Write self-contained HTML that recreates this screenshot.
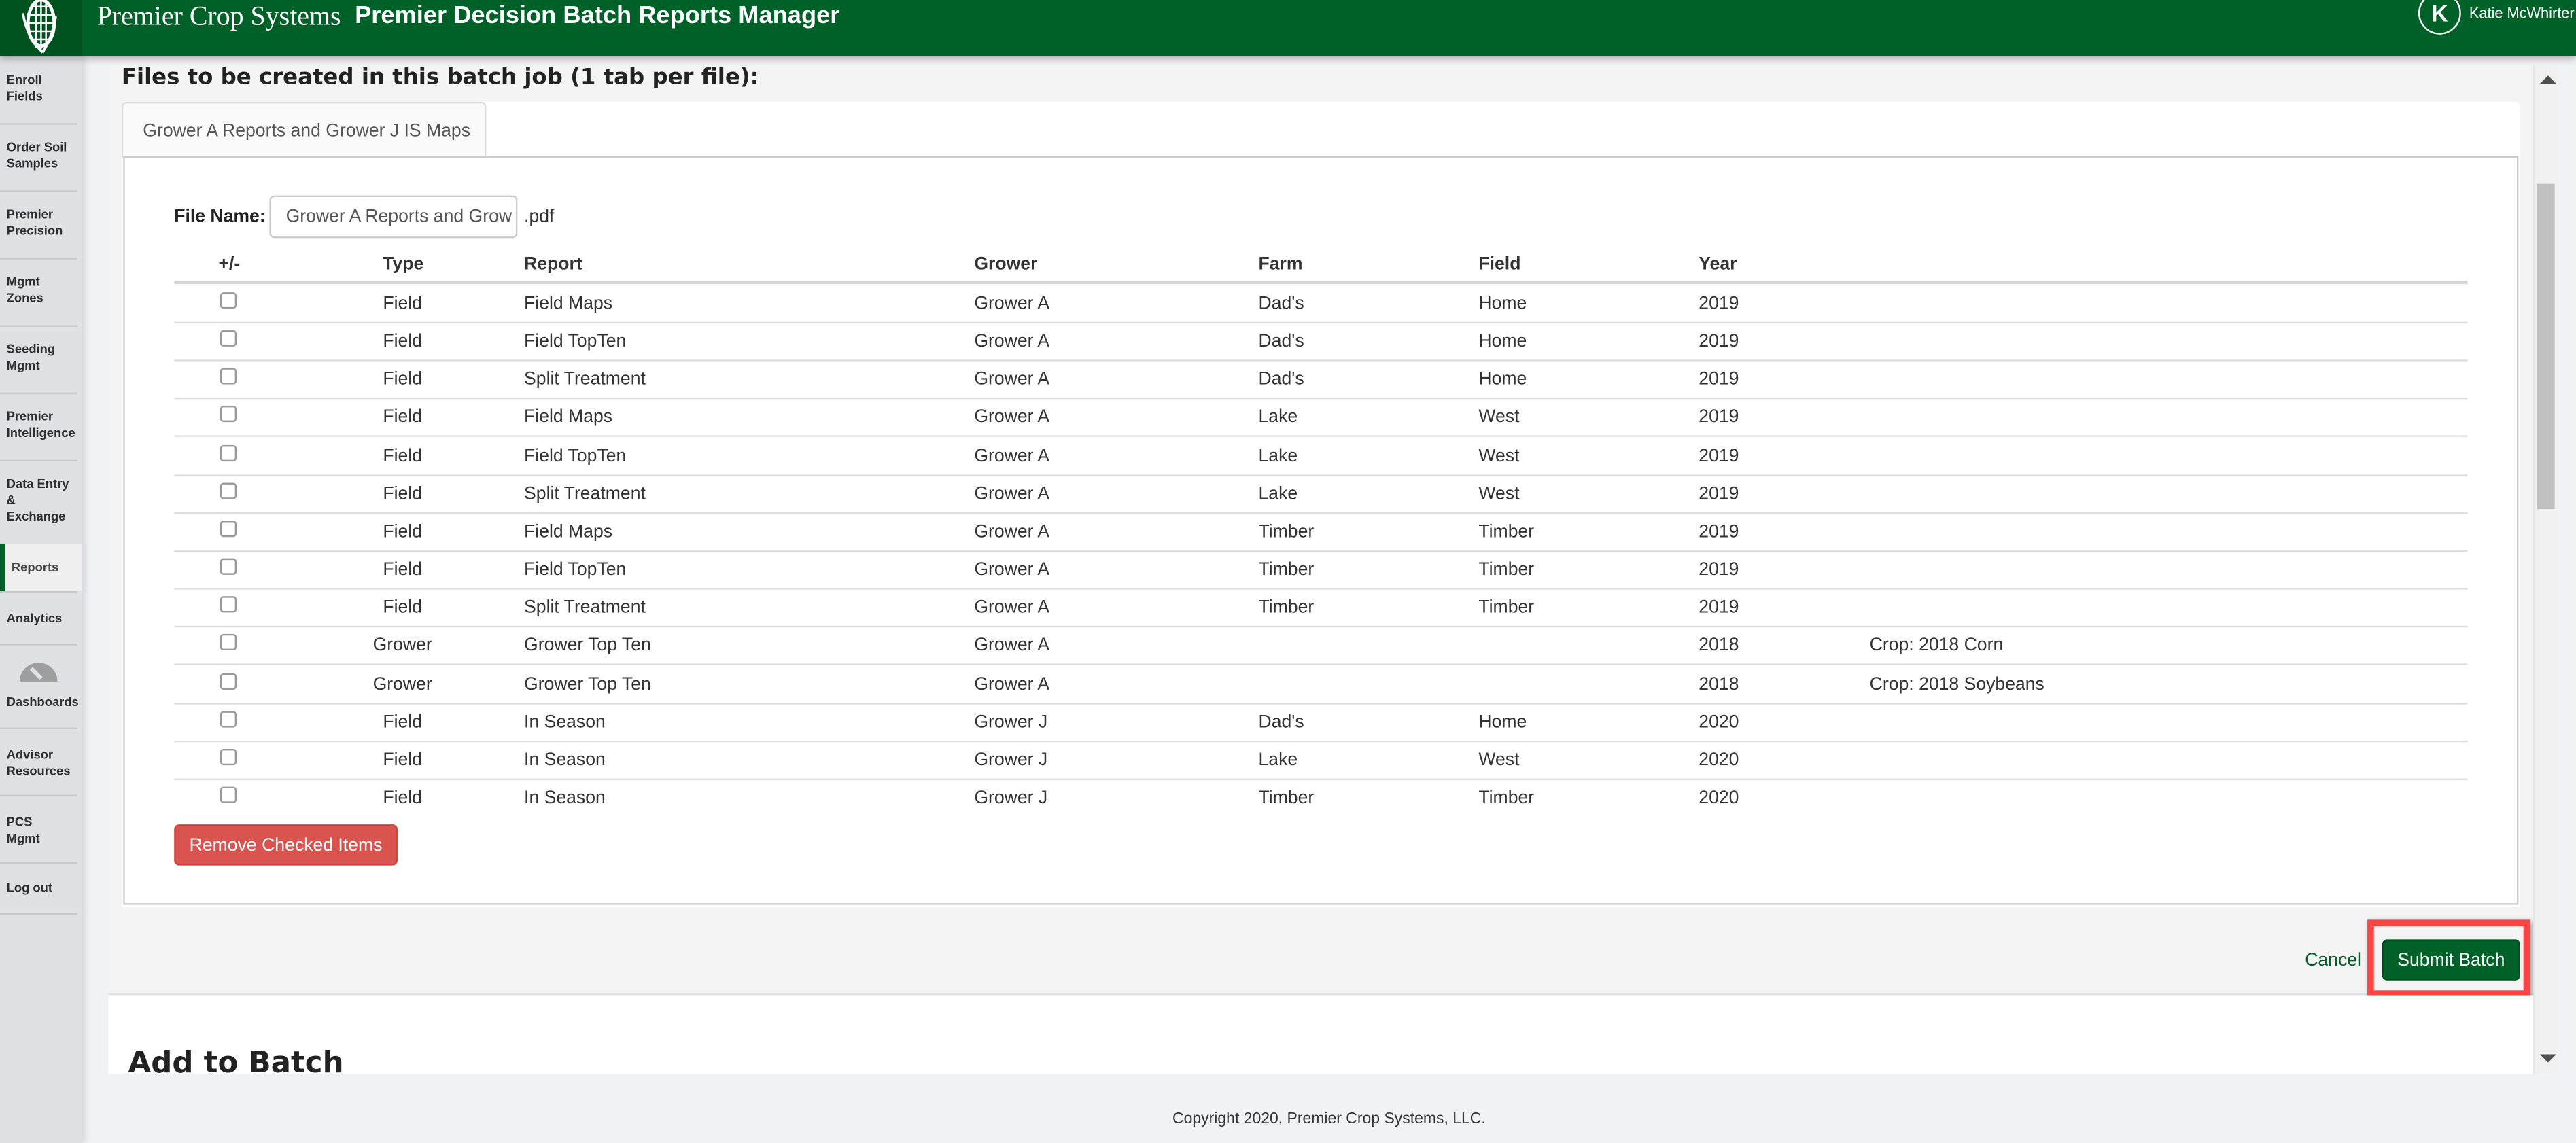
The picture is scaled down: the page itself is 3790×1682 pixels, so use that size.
<!DOCTYPE html>
<html><head><meta charset="utf-8"><style>
html,body{margin:0;padding:0;width:3790px;height:1682px;overflow:hidden;background:#f0f2f5}
#w{position:absolute;left:0;top:0;width:1568px;height:696px;transform:scale(2.4171,2.4167);transform-origin:0 0;font-family:"Liberation Sans",Arial,sans-serif;color:#333;background:#f0f2f5}
.a{position:absolute}
.hdr{left:0;top:0;width:1568px;height:34px;background:#006128;box-shadow:0 2px 4px rgba(0,0,0,.3);z-index:3}
.logo{left:0;top:0;width:50px;height:34px;background:#00521f}
.side{left:0;top:34px;width:50px;height:662px;background:#e0e1e5;box-shadow:2px 0 4px rgba(0,0,0,.12);z-index:2}
.si{position:absolute;left:4px;font-size:7.6px;font-weight:bold;line-height:10px;color:#2d2d2d}
.sl{position:absolute;left:0;width:47px;height:1px;background:#c9c9cc}
.panel{left:66px;top:40px;width:1476px;height:565px;background:#f4f4f4;border-bottom:1px solid #e2e2e2}
.td{position:absolute;font-size:11px;white-space:nowrap}
.cb{position:absolute;left:134px;width:8px;height:8px;border:1px solid #999;border-radius:2px;background:#fff}
.rl{position:absolute;left:106px;width:1396px;height:1px;background:#dedede}
</style></head><body><div id="w">
<div class="a hdr">
 <div class="a logo">
  <svg width="50" height="34" viewBox="0 0 50 34"><ellipse cx="25" cy="14" rx="8" ry="14" fill="none" stroke="#fff" stroke-width="2"/><path d="M19 4h12M18 9h14M17 14h16M18 19h14M19 24h12M22 0v29M25 0v30M28 0v29" stroke="#fff" stroke-width="1"/><path d="M14 8q2 14 12 24M34 10q-2 12-8 22" stroke="#fff" stroke-width="1.5" fill="none"/></svg>
 </div>
 <div class="a" style="left:59px;top:0px;font-family:'Liberation Serif',serif;font-size:16.5px;color:#fff">Premier Crop Systems</div>
 <div class="a" style="left:216px;top:1px;font-size:15px;font-weight:bold;color:#fff">Premier Decision Batch Reports Manager</div>
 <div class="a" style="left:1472px;top:-5px;width:24px;height:24px;border:1.3px solid #fff;border-radius:50%;color:#fff;font-weight:bold;font-size:14px;text-align:center;line-height:24px">K</div>
 <div class="a" style="left:1503px;top:3px;font-size:9px;color:#fff">Katie McWhirter</div>
</div>
<div class="a side">
 <div class="si" style="top:10px">Enroll<br>Fields</div><div class="sl" style="top:41px"></div>
 <div class="si" style="top:51px">Order Soil<br>Samples</div><div class="sl" style="top:82px"></div>
 <div class="si" style="top:92px">Premier<br>Precision</div><div class="sl" style="top:123px"></div>
 <div class="si" style="top:133px">Mgmt<br>Zones</div><div class="sl" style="top:164px"></div>
 <div class="si" style="top:174px">Seeding<br>Mgmt</div><div class="sl" style="top:205px"></div>
 <div class="si" style="top:215px">Premier<br>Intelligence</div><div class="sl" style="top:246px"></div>
 <div class="si" style="top:256px;line-height:10px">Data Entry<br>&amp;<br>Exchange</div>
 <div class="a" style="left:0;top:297px;width:50px;height:29px;background:#efefef;border-left:3px solid #006128;box-sizing:border-box"></div>
 <div class="si" style="top:307px;left:7px;color:#444">Reports</div><div class="sl" style="top:326px"></div>
 <div class="si" style="top:338px">Analytics</div><div class="sl" style="top:358px"></div>
 <svg class="a" style="left:11px;top:368px" width="25" height="14"><path d="M1 13A11.5 11.5 0 0 1 24 13Z" fill="#9e9e9e"/><path d="M8 5l6 6" stroke="#e0e1e5" stroke-width="2.5"/></svg>
 <div class="si" style="top:389px">Dashboards</div><div class="sl" style="top:409px"></div>
 <div class="si" style="top:421px">Advisor<br>Resources</div><div class="sl" style="top:450px"></div>
 <div class="si" style="top:462px">PCS<br>Mgmt</div><div class="sl" style="top:491px"></div>
 <div class="si" style="top:502px">Log out</div><div class="sl" style="top:522px"></div>
</div>

<div class="a panel"></div>
<div class="a" style="left:74px;top:40px;font-family:'DejaVu Sans',sans-serif;font-weight:bold;font-size:13.4px;color:#222">Files to be created in this batch job (1 tab per file):</div>
<div class="a" style="left:74px;top:62px;width:1460px;height:490px;background:#fff;border-radius:3px 3px 0 0"></div>
<div class="a" style="left:74px;top:62px;width:222px;height:34px;border:1px solid #ddd;border-bottom:none;border-radius:3px 3px 0 0;background:#fafafa;box-sizing:border-box"></div>
<div class="a" style="left:87px;top:74px;font-size:11px;color:#555">Grower A Reports and Grower J IS Maps</div>
<div class="a" style="left:75px;top:95px;width:1458px;height:456px;border:1px solid #ccc;box-sizing:border-box;background:#fff"></div>

<div class="a" style="left:106px;top:126px;font-size:11px;font-weight:bold;color:#222">File Name:</div>
<div class="a" style="left:164px;top:119px;width:151px;height:26px;border:1px solid #ccc;border-radius:3px;box-sizing:border-box;background:#fff;overflow:hidden"><div style="padding:6px 0 0 9px;font-size:11px;color:#555;white-space:nowrap">Grower A Reports and Grow</div></div>
<div class="a" style="left:319px;top:126px;font-size:11px">.pdf</div>

<div class="td" style="left:133px;top:155px;font-weight:bold">+/-</div>
<div class="td" style="left:233px;top:155px;font-weight:bold">Type</div>
<div class="td" style="left:319px;top:155px;font-weight:bold">Report</div>
<div class="td" style="left:593px;top:155px;font-weight:bold">Grower</div>
<div class="td" style="left:766px;top:155px;font-weight:bold">Farm</div>
<div class="td" style="left:900px;top:155px;font-weight:bold">Field</div>
<div class="td" style="left:1034px;top:155px;font-weight:bold">Year</div>
<div class="rl" style="top:171px;height:2px;background:#d5d5d5"></div>

<div id="rows"></div>
<script>
var d=[["Field","Field Maps","Grower A","Dad's","Home","2019",""],["Field","Field TopTen","Grower A","Dad's","Home","2019",""],["Field","Split Treatment","Grower A","Dad's","Home","2019",""],["Field","Field Maps","Grower A","Lake","West","2019",""],["Field","Field TopTen","Grower A","Lake","West","2019",""],["Field","Split Treatment","Grower A","Lake","West","2019",""],["Field","Field Maps","Grower A","Timber","Timber","2019",""],["Field","Field TopTen","Grower A","Timber","Timber","2019",""],["Field","Split Treatment","Grower A","Timber","Timber","2019",""],["Grower","Grower Top Ten","Grower A","","","2018","Crop: 2018 Corn"],["Grower","Grower Top Ten","Grower A","","","2018","Crop: 2018 Soybeans"],["Field","In Season","Grower J","Dad's","Home","2020",""],["Field","In Season","Grower J","Lake","West","2020",""],["Field","In Season","Grower J","Timber","Timber","2020",""]];
var h="";d.forEach(function(r,i){var y=178+i*23.15;
h+='<div class="cb" style="top:'+(y)+'px"></div>';
h+='<div class="td" style="left:205px;width:80px;text-align:center;top:'+(y+1)+'px">'+r[0]+'</div>';
var xs=[319,593,766,900,1034,1138];for(var k=1;k<7;k++)h+='<div class="td" style="left:'+xs[k-1]+'px;top:'+(y+1)+'px">'+r[k]+'</div>';
if(i<13)h+='<div class="rl" style="top:'+(y+18)+'px"></div>';});
document.getElementById("rows").innerHTML=h;
</script>

<div class="a" style="left:106px;top:502px;width:136px;height:25px;background:#d9534f;border:1px solid #d43f3a;border-radius:3px;box-sizing:border-box;color:#fff;font-size:11px;text-align:center;line-height:24px">Remove Checked Items</div>

<div class="a" style="left:1403px;top:579px;font-size:11px;color:#006128">Cancel</div>
<div class="a" style="left:1441px;top:560px;width:99px;height:47px;border:4px solid #ff4444;box-sizing:border-box;box-shadow:1px 1px 3px rgba(0,0,0,.4)"></div>
<div class="a" style="left:1450px;top:572px;width:84px;height:25px;background:#006128;border:1px solid #004d1f;border-radius:3px;box-sizing:border-box;color:#fff;font-size:11px;text-align:center;line-height:24px">Submit Batch</div>

<div class="a" style="left:66px;top:606px;width:1476px;height:48px;background:#fff;overflow:hidden"><div style="position:absolute;left:12px;top:31px;font-family:'DejaVu Sans',sans-serif;font-weight:bold;font-size:18px;color:#222">Add to Batch</div></div>

<div class="a" style="left:1542px;top:40px;width:14px;height:614px;background:#f1f1f1;border-left:1px solid #e5e5e5"></div>
<div class="a" style="left:1544px;top:112px;width:11px;height:198px;background:#c1c1c1"></div>
<div class="a" style="left:1546px;top:46px;width:0;height:0;border-left:5px solid transparent;border-right:5px solid transparent;border-bottom:5px solid #505050"></div>
<div class="a" style="left:1546px;top:642px;width:0;height:0;border-left:5px solid transparent;border-right:5px solid transparent;border-top:5px solid #505050"></div>

<div class="a" style="left:50px;width:1518px;top:676px;text-align:center;font-size:9.5px;color:#333">Copyright 2020, Premier Crop Systems, LLC.</div>
</div></body></html>
